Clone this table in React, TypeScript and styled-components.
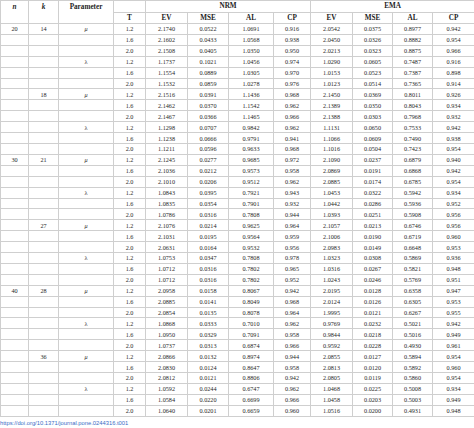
import React from "react";
import styled, { createGlobalStyle } from "styled-components";

const Global = createGlobalStyle`
  html, body { margin: 0; padding: 0; background: #fff; }
  body { font-family: "Liberation Serif", "Times New Roman", serif; color: #222; }
`;

const Page = styled.div`
  width: 474px;
  display: flex;
  flex-direction: column;
`;

const Table = styled.table`
  width: 474px;
  table-layout: fixed;
  border-collapse: collapse;
  font-family: "Liberation Serif", "Times New Roman", serif;
`;

const HeadRow = styled.tr`
  height: 11.5px;
`;

const Row = styled.tr`
  height: 10.92px;
`;

const Th = styled.th<{ $top?: boolean }>`
  border: 1px solid #cfcfcf;
  font-size: 7.2px;
  font-weight: bold;
  color: #1e1e1e;
  text-align: center;
  padding: 0;
  line-height: 10px;
  vertical-align: ${(p) => (p.$top ? "top" : "middle")};
  ${(p) => (p.$top ? "padding-top: 1px;" : "")}
`;

const Td = styled.td<{ $italic?: boolean }>`
  border: 1px solid #cfcfcf;
  font-size: 6.2px;
  color: #2a2a2a;
  text-align: center;
  padding: 0;
  line-height: 9px;
  white-space: nowrap;
  font-style: ${(p) => (p.$italic ? "italic" : "normal")};
`;

const Footer = styled.div`
  margin-top: 2px;
  font-family: "Liberation Sans", Arial, sans-serif;
  font-size: 5.8px;
  color: #3a6cc6;
  line-height: 8px;
`;

type R = [string, string, string, string, string, string, string, string, string];

const rows: { n: string; k: string; p: string; d: R }[] = [
  { n: "20", k: "14", p: "μ", d: ["1.2", "2.1740", "0.0522", "1.0691", "0.916", "2.0542", "0.0375", "0.8977", "0.942"] },
  { n: "", k: "", p: "", d: ["1.6", "2.1602", "0.0433", "1.0568", "0.938", "2.0450", "0.0326", "0.8882", "0.954"] },
  { n: "", k: "", p: "", d: ["2.0", "2.1508", "0.0405", "1.0350", "0.950", "2.0213", "0.0323", "0.8875", "0.966"] },
  { n: "", k: "", p: "λ", d: ["1.2", "1.1737", "0.1021", "1.0456", "0.974", "1.0290", "0.0605", "0.7487", "0.916"] },
  { n: "", k: "", p: "", d: ["1.6", "1.1554", "0.0889", "1.0305", "0.970", "1.0153", "0.0523", "0.7387", "0.898"] },
  { n: "", k: "", p: "", d: ["2.0", "1.1532", "0.0859", "1.0278", "0.976", "1.0123", "0.0514", "0.7365", "0.914"] },
  { n: "", k: "18", p: "μ", d: ["1.2", "2.1516", "0.0391", "1.1436", "0.968", "2.1450", "0.0369", "0.8011", "0.926"] },
  { n: "", k: "", p: "", d: ["1.6", "2.1462", "0.0370", "1.1542", "0.962", "2.1389", "0.0350", "0.8043", "0.934"] },
  { n: "", k: "", p: "", d: ["2.0", "2.1467", "0.0366", "1.1465", "0.966", "2.1388", "0.0303", "0.7968", "0.932"] },
  { n: "", k: "", p: "λ", d: ["1.2", "1.1298", "0.0707", "0.9842", "0.962", "1.1131", "0.0650", "0.7533", "0.942"] },
  { n: "", k: "", p: "", d: ["1.6", "1.1238", "0.0666", "0.9791", "0.941", "1.1066", "0.0609", "0.7490", "0.938"] },
  { n: "", k: "", p: "", d: ["2.0", "1.1211", "0.0596", "0.9633", "0.968", "1.1016", "0.0504", "0.7423", "0.954"] },
  { n: "30", k: "21", p: "μ", d: ["1.2", "2.1245", "0.0277", "0.9685", "0.972", "2.1090", "0.0237", "0.6879", "0.940"] },
  { n: "", k: "", p: "", d: ["1.6", "2.1036", "0.0212", "0.9573", "0.958", "2.0869", "0.0191", "0.6868", "0.942"] },
  { n: "", k: "", p: "", d: ["2.0", "2.1010", "0.0206", "0.9512", "0.962", "2.0885", "0.0174", "0.6785", "0.954"] },
  { n: "", k: "", p: "λ", d: ["1.2", "1.0843", "0.0395", "0.7921", "0.943", "1.0453", "0.0322", "0.5942", "0.934"] },
  { n: "", k: "", p: "", d: ["1.6", "1.0835", "0.0354", "0.7901", "0.932", "1.0442", "0.0286", "0.5936", "0.952"] },
  { n: "", k: "", p: "", d: ["2.0", "1.0786", "0.0316", "0.7808", "0.944", "1.0393", "0.0251", "0.5908", "0.956"] },
  { n: "", k: "27", p: "μ", d: ["1.2", "2.1076", "0.0214", "0.9625", "0.964", "2.1057", "0.0213", "0.6746", "0.956"] },
  { n: "", k: "", p: "", d: ["1.6", "2.1031", "0.0195", "0.9564", "0.959", "2.1006", "0.0190", "0.6719", "0.960"] },
  { n: "", k: "", p: "", d: ["2.0", "2.0631", "0.0164", "0.9532", "0.956", "2.0983", "0.0149", "0.6648", "0.953"] },
  { n: "", k: "", p: "λ", d: ["1.2", "1.0753", "0.0347", "0.7808", "0.978", "1.0323", "0.0308", "0.5869", "0.936"] },
  { n: "", k: "", p: "", d: ["1.6", "1.0712", "0.0316", "0.7802", "0.965", "1.0316", "0.0267", "0.5821", "0.948"] },
  { n: "", k: "", p: "", d: ["2.0", "1.0712", "0.0316", "0.7802", "0.952", "1.0243", "0.0246", "0.5769", "0.951"] },
  { n: "40", k: "28", p: "μ", d: ["1.2", "2.0958", "0.0158", "0.8067", "0.942", "2.0195", "0.0128", "0.6358", "0.947"] },
  { n: "", k: "", p: "", d: ["1.6", "2.0885", "0.0141", "0.8049", "0.968", "2.0124", "0.0126", "0.6305", "0.953"] },
  { n: "", k: "", p: "", d: ["2.0", "2.0854", "0.0135", "0.8078", "0.964", "1.9995", "0.0121", "0.6267", "0.955"] },
  { n: "", k: "", p: "λ", d: ["1.2", "1.0868", "0.0333", "0.7010", "0.962", "0.9769", "0.0232", "0.5021", "0.942"] },
  { n: "", k: "", p: "", d: ["1.6", "1.0950", "0.0329", "0.7091", "0.958", "0.9844", "0.0218", "0.5016", "0.949"] },
  { n: "", k: "", p: "", d: ["2.0", "1.0737", "0.0313", "0.6874", "0.966", "0.9592", "0.0228", "0.4930", "0.961"] },
  { n: "", k: "36", p: "μ", d: ["1.2", "2.0866", "0.0132", "0.8974", "0.944", "2.0855", "0.0127", "0.5894", "0.954"] },
  { n: "", k: "", p: "", d: ["1.6", "2.0830", "0.0124", "0.8647", "0.958", "2.0813", "0.0120", "0.5892", "0.960"] },
  { n: "", k: "", p: "", d: ["2.0", "2.0812", "0.0121", "0.8806", "0.942", "2.0805", "0.0119", "0.5860", "0.954"] },
  { n: "", k: "", p: "λ", d: ["1.2", "1.0592", "0.0244", "0.6747", "0.962", "1.0468", "0.0225", "0.5008", "0.934"] },
  { n: "", k: "", p: "", d: ["1.6", "1.0584", "0.0220", "0.6699", "0.966", "1.0458", "0.0203", "0.5003", "0.949"] },
  { n: "", k: "", p: "", d: ["2.0", "1.0640", "0.0201", "0.6659", "0.960", "1.0516", "0.0200", "0.4931", "0.948"] },
];

const widths = [28, 30, 55, 32, 42, 41, 45, 37, 42, 40, 40, 42];

export default function App() {
  return (
    <Page>
      <Global />
      <Table>
        <colgroup>
          {widths.map((w, i) => (
            <col key={i} style={{ width: w }} />
          ))}
        </colgroup>
        <thead>
          <HeadRow>
            <Th rowSpan={2} $top>
              <i>n</i>
            </Th>
            <Th rowSpan={2} $top>
              <i>k</i>
            </Th>
            <Th rowSpan={2} $top>
              Parameter
            </Th>
            <Th />
            <Th colSpan={4}>NRM</Th>
            <Th colSpan={4}>EMA</Th>
          </HeadRow>
          <HeadRow>
            <Th>T</Th>
            <Th>EV</Th>
            <Th>MSE</Th>
            <Th>AL</Th>
            <Th>CP</Th>
            <Th>EV</Th>
            <Th>MSE</Th>
            <Th>AL</Th>
            <Th>CP</Th>
          </HeadRow>
        </thead>
        <tbody>
          {rows.map((r, i) => (
            <Row key={i}>
              <Td>{r.n}</Td>
              <Td>{r.k}</Td>
              <Td $italic={r.p === "μ"}>{r.p}</Td>
              {r.d.map((v, j) => (
                <Td key={j}>{v}</Td>
              ))}
            </Row>
          ))}
        </tbody>
      </Table>
      <Footer>https://doi.org/10.1371/journal.pone.0244316.t001</Footer>
    </Page>
  );
}
